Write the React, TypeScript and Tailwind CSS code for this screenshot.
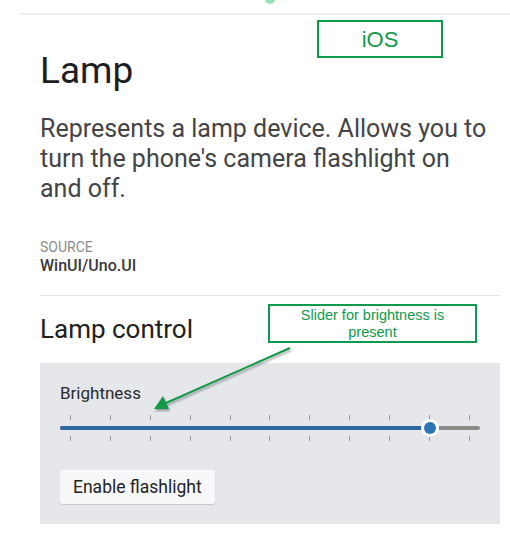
import React from "react";

const ticks = [0, 1, 2, 3, 4, 5, 6, 7, 8, 9, 10];

function TickRow() {
  return (
    <div className="flex justify-between px-[10px] h-[5px]">
      {ticks.map((i) => (
        <div key={i} className="w-[1px] h-[5px] bg-[#9a9a9a]" />
      ))}
    </div>
  );
}

export default function App() {
  return (
    <div className="relative w-[510px] h-[558px] bg-white overflow-hidden" style={{ fontFamily: "Roboto, 'Noto Sans', sans-serif" }}>
      {/* top green dot */}
      <div className="absolute left-[265px] top-[-6px] w-[10px] h-[10px] rounded-full bg-[#8fe3b8]" />
      <div className="h-[13px]" />
      <div className="ml-[21px] h-[2px] bg-[#eeeeee]" />

      <div className="pl-[40px] pr-[10px]">
        <h1 className="mt-[34px] text-[37px] leading-[44px] text-[#1d1d1f] font-normal">Lamp</h1>
        <p className="mt-[21px] pr-[12px] text-[25px] leading-[30px] text-[#444446]">
          Represents a lamp device. Allows you to turn the phone's camera flashlight on and off.
        </p>
        <div className="mt-[34px] text-[14px] leading-[18px] text-[#8c8c8c] uppercase">Source</div>
        <div className="text-[16px] leading-[20px] text-[#3a3a3a] font-medium">WinUI/Uno.UI</div>
        <div className="mt-[19px] h-[1px] bg-[#e6e6e6]" />
        <h2 className="mt-[17px] text-[26px] leading-[32px] text-[#202020] font-normal">Lamp control</h2>

        <div className="mt-[18px] bg-[#e6e7eb] pt-[19px] pb-[20px] px-[20px]">
          <div className="text-[17px] leading-[22px] text-[#2a2a2a]">Brightness</div>
          {/* slider */}
          <div className="mt-[11px] flex flex-col gap-[4px]">
            <TickRow />
            <div className="relative h-[8px] flex items-center">
              <div className="flex-1 flex h-[4px] rounded-full overflow-hidden bg-[#8a8a8a]">
                <div className="h-full bg-[#2d67a2]" style={{ width: "370px" }} />
              </div>
              <div className="absolute left-[361px] top-[-5px] w-[18px] h-[18px] rounded-full bg-white flex items-center justify-center">
                <div className="w-[12px] h-[12px] rounded-full bg-[#2d74b4]" />
              </div>
            </div>
            <TickRow />
          </div>
          <button className="mt-[29px] h-[34px] px-[13px] rounded-[3px] bg-[#f7f8fa] text-[17.5px] text-[#222222] shadow-[0_1px_1px_rgba(0,0,0,0.15)]">
            Enable flashlight
          </button>
        </div>
      </div>

      {/* annotations */}
      <div className="absolute left-[317px] top-[20px] w-[126px] h-[38px] border-2 border-[#0e9a4c] flex items-center justify-center text-[22px] text-[#11994a]" style={{ fontFamily: "'Liberation Sans', Arial, sans-serif" }}>
        iOS
      </div>
      <div className="absolute left-[268px] top-[304px] w-[209px] h-[39px] border-2 border-[#0e9a4c] flex items-center justify-center text-center text-[14.5px] leading-[17px] text-[#11994a]" style={{ fontFamily: "'Liberation Sans', Arial, sans-serif" }}>
        Slider for brightness is<br />present
      </div>
      <svg className="absolute left-0 top-0" width="510" height="558" viewBox="0 0 510 558">
        <defs>
          <filter id="sh" x="-20%" y="-20%" width="140%" height="140%">
            <feDropShadow dx="1" dy="2" stdDeviation="1" floodColor="#000" floodOpacity="0.35" />
          </filter>
        </defs>
        <g filter="url(#sh)">
          <line x1="290" y1="348" x2="166" y2="403" stroke="#14984a" strokeWidth="2" />
          <polygon points="154,409 163,396 169,409" fill="#14984a" />
        </g>
      </svg>
    </div>
  );
}
